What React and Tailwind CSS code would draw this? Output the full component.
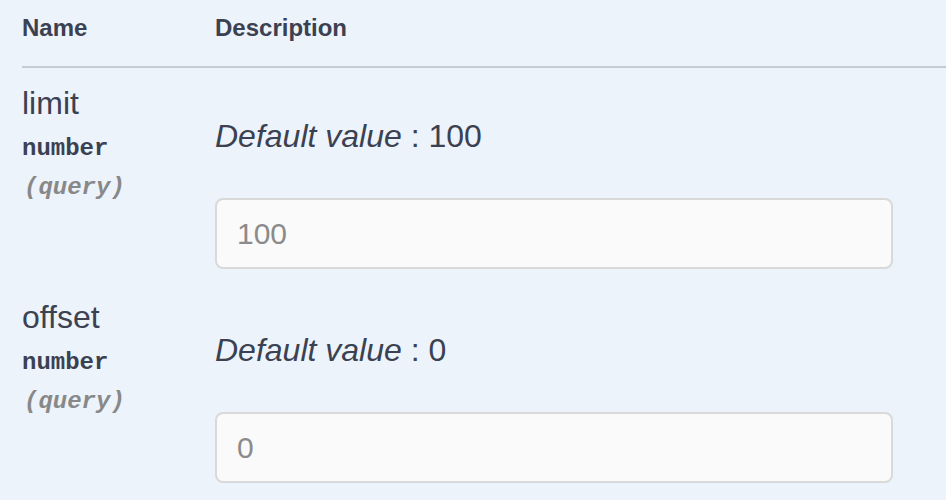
const params = [
  { name: "limit", type: "number", location: "query", defaultValue: "100" },
  { name: "offset", type: "number", location: "query", defaultValue: "0" },
];

function ParameterRow({ param }) {
  return (
    <div className="flex pb-[13px]">
      <div className="w-[193px] shrink-0 pt-[15px]">
        <div className="text-[32px] leading-[40px] text-[#3b4151]">{param.name}</div>
        <div
          className="mt-[10px] text-[24px] leading-[32px] font-bold text-[#3b4151]"
          style={{ fontFamily: '"Liberation Mono", monospace' }}
        >
          {param.type}
        </div>
        <div
          className="mt-[7px] pl-[2px] text-[24px] leading-[32px] font-bold italic text-[#888888]"
          style={{ fontFamily: '"Liberation Mono", monospace' }}
        >
          ({param.location})
        </div>
      </div>
      <div className="pt-[48px]">
        <p className="text-[32px] leading-[40px] text-[#3b4151]">
          <em>Default value</em> : {param.defaultValue}
        </p>
        <input
          className="mt-[42px] block h-[71px] w-[678px] rounded-[8px] border-2 border-[#d9d9d9] bg-[#fafafa] px-[20px] text-[30px] text-[#3b4151] outline-none placeholder:text-[#8b8b8b]"
          placeholder={param.defaultValue}
          type="text"
        />
      </div>
    </div>
  );
}

export default function App() {
  return (
    <div
      className="min-h-[500px] w-full overflow-hidden bg-[#ecf3fb] pl-[22px]"
      style={{ fontFamily: '"Liberation Sans", Arial, sans-serif' }}
    >
      <div className="flex border-b-2 border-[#c6ccd7] pt-[12px] pb-[22px]">
        <div className="w-[193px] shrink-0 text-[24px] leading-[32px] font-bold text-[#3b4151]">Name</div>
        <div className="text-[24px] leading-[32px] font-bold text-[#3b4151]">Description</div>
      </div>
      {params.map((param) => (
        <ParameterRow key={param.name} param={param} />
      ))}
    </div>
  );
}
